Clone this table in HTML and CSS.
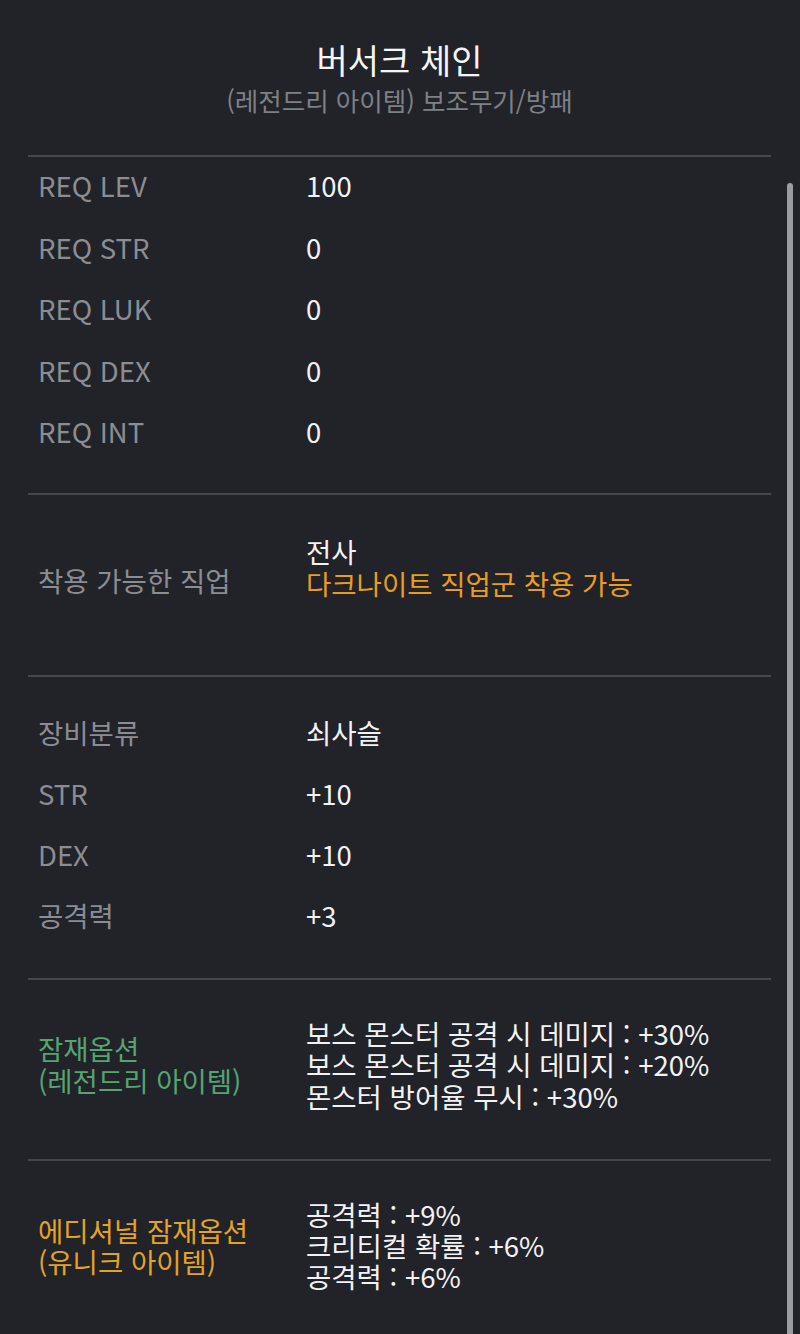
FILE: index.html
```html
<!DOCTYPE html>
<html lang="ko">
<head>
<meta charset="utf-8">
<title>버서크 체인</title>
<link rel="stylesheet" href="styles.css">
</head>
<body>
<div class="page">
  <header class="header">
    <h1 class="title">버서크 체인</h1>
    <div class="subtitle">(레전드리 아이템) 보조무기/방패</div>
  </header>

  <section class="section section-req">
    <div class="row"><div class="label">REQ LEV</div><div class="value">100</div></div>
    <div class="row"><div class="label">REQ STR</div><div class="value">0</div></div>
    <div class="row"><div class="label">REQ LUK</div><div class="value">0</div></div>
    <div class="row"><div class="label">REQ DEX</div><div class="value">0</div></div>
    <div class="row"><div class="label">REQ INT</div><div class="value">0</div></div>
  </section>

  <section class="section section-job">
    <div class="mrow mrow-job">
      <div class="label">착용 가능한 직업</div>
      <div class="value lines">
        <div>전사</div>
        <div class="orange">다크나이트 직업군 착용 가능</div>
      </div>
    </div>
  </section>

  <section class="section section-stats">
    <div class="row"><div class="label">장비분류</div><div class="value">쇠사슬</div></div>
    <div class="row"><div class="label">STR</div><div class="value">+10</div></div>
    <div class="row"><div class="label">DEX</div><div class="value">+10</div></div>
    <div class="row"><div class="label">공격력</div><div class="value">+3</div></div>
  </section>

  <section class="section section-potential">
    <div class="mrow">
      <div class="label lines green">
        <div>잠재옵션</div>
        <div>(레전드리 아이템)</div>
      </div>
      <div class="value lines">
        <div>보스 몬스터 공격 시 데미지 : +30%</div>
        <div>보스 몬스터 공격 시 데미지 : +20%</div>
        <div>몬스터 방어율 무시 : +30%</div>
      </div>
    </div>
  </section>

  <section class="section section-additional">
    <div class="mrow">
      <div class="label lines gold">
        <div>에디셔널 잠재옵션</div>
        <div>(유니크 아이템)</div>
      </div>
      <div class="value lines">
        <div>공격력 : +9%</div>
        <div>크리티컬 확률 : +6%</div>
        <div>공격력 : +6%</div>
      </div>
    </div>
  </section>

  <div class="scrollbar"></div>
</div>
</body>
</html>
```

FILE: styles.css
```css
html, body {
  margin: 0;
  padding: 0;
  background: #212329;
}

body {
  font-family: "Noto Sans CJK KR", "Noto Sans", sans-serif;
  color: #f0f0f2;
}

.page {
  position: relative;
  min-height: 1334px;
  padding: 0 29px 0 28px;
  overflow: hidden;
}

.header {
  text-align: center;
  padding-top: 38px;
  height: 157px;
  box-sizing: border-box;
  border-bottom: 2px solid #45474d;
}

.title {
  margin: 0;
  font-size: 34px;
  font-weight: 400;
  line-height: 44px;
  color: #f5f5f6;
}

.subtitle {
  margin-top: 0;
  font-size: 25.5px;
  line-height: 36px;
  color: #7e8086;
}

.section {
  border-bottom: 2px solid #45474d;
}

.section-req {
  padding: 0 0 28.5px;
}

.section-stats {
  padding: 27px 0 30px;
}

.section-req .row {
  height: 61.5px;
}

.section-stats .row {
  height: 61px;
}

.row {
  display: flex;
  align-items: center;
  box-sizing: border-box;
  padding-bottom: 5px;
}

.label {
  width: 268px;
  padding-left: 10px;
  flex: none;
  font-size: 27.5px;
  color: #8b8d93;
}

.value {
  font-size: 27.5px;
  color: #f2f2f4;
}

.section-job {
  padding: 40px 0 45.5px;
}

.section-potential {
  padding: 37.5px 0 47px;
}

.section-additional {
  padding: 38px 0 0;
  border-bottom: none;
}

.mrow {
  display: flex;
  align-items: center;
}

.mrow-job {
  min-height: 94.5px;
  align-items: flex-start;
}

.mrow-job .label {
  align-self: center;
  padding-bottom: 4px;
}

.lines {
  line-height: 31.5px;
}

.mrow-job .lines {
  line-height: 32px;
}

.section-additional .lines {
  line-height: 31px;
}

.orange {
  color: #e89d22;
}

.green {
  color: #55a472;
}

.gold {
  color: #e2a326;
}

.scrollbar {
  position: absolute;
  right: 7px;
  top: 183px;
  bottom: -4px;
  width: 6px;
  border-radius: 3px;
  background: #9b9ca1;
}
```
